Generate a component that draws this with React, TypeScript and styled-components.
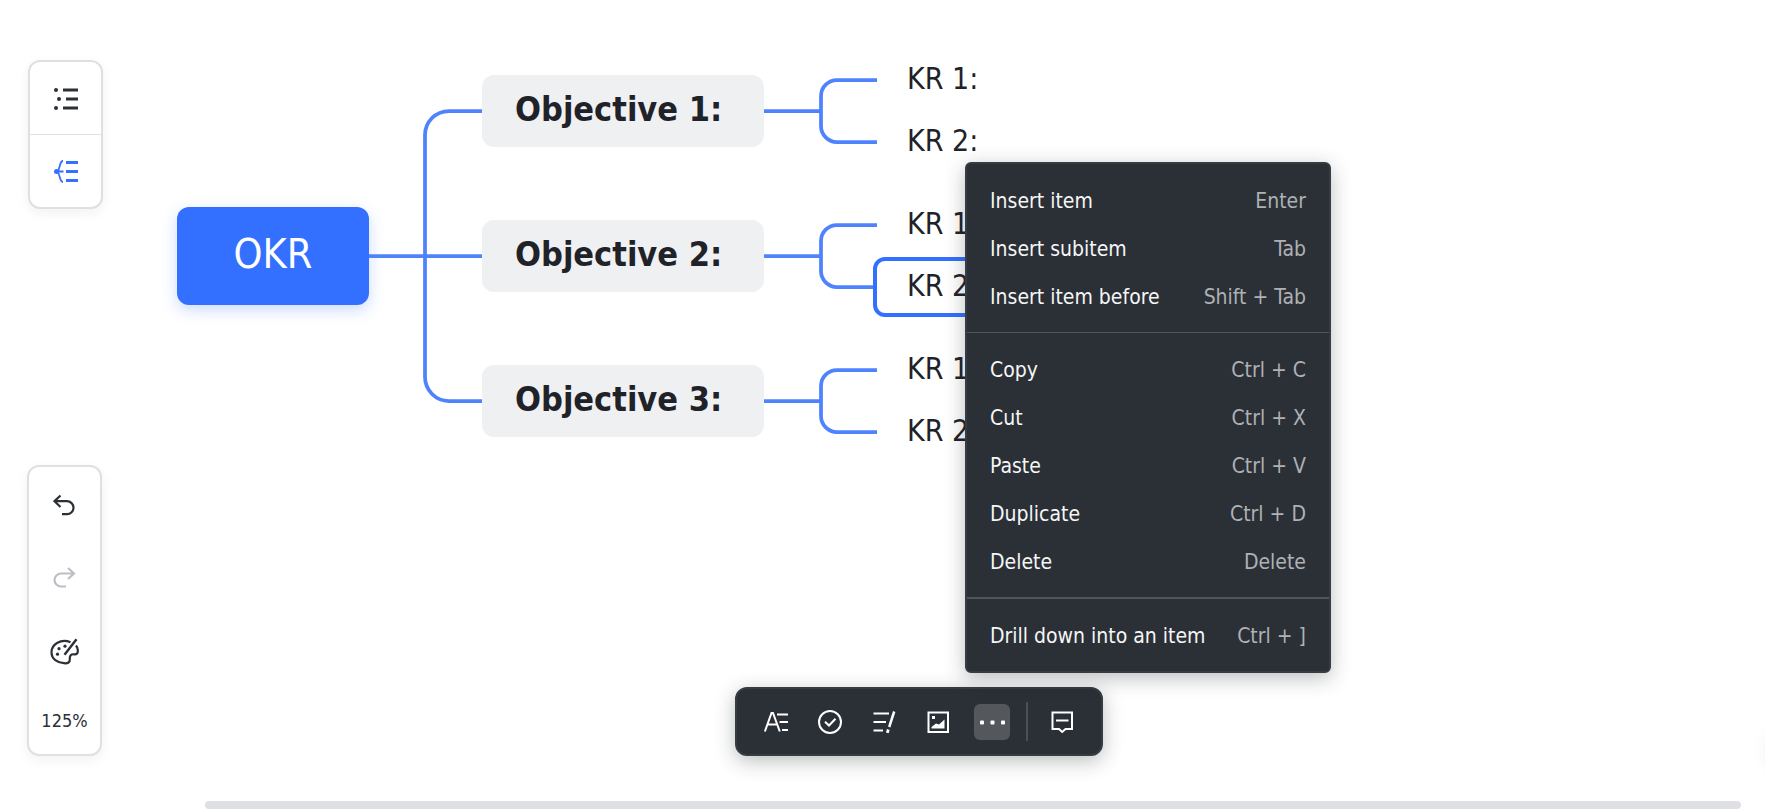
import React from "react";
import styled, { createGlobalStyle, css } from "styled-components";

const BLUE = "#3370ff";
const LINE = "#4e83fd";
const DARK = "#2b2f36";

const GlobalStyle = createGlobalStyle`
  * { box-sizing: border-box; }
  body {
    margin: 0;
    background: #fff;
    color: #1f2329;
    font-family: "DejaVu Sans Condensed", "DejaVu Sans", Tahoma, sans-serif;
  }
  button {
    font: inherit;
    color: inherit;
    border: 0;
    padding: 0;
    background: none;
    cursor: pointer;
  }
`;

const Page = styled.div`
  position: relative;
  display: flex;
  min-height: 100vh;
  overflow: hidden;
`;

const Rail = styled.aside`
  display: flex;
  flex: none;
  flex-direction: column;
  justify-content: space-between;
  padding: 60px 0 53px 27px;
`;

const Panel = styled.div`
  display: flex;
  flex-direction: column;
  width: 75px;
  background: #fff;
  border: 2px solid #dee0e3;
  border-radius: 12px;
  box-shadow: 0 4px 12px rgba(31, 35, 41, 0.06);
`;

const ViewPanel = styled(Panel)`
  margin-left: 1px;
`;

const RailButton = styled.button<{ $active?: boolean; $divided?: boolean; $size: number }>`
  display: flex;
  align-items: center;
  justify-content: center;
  height: ${(p) => p.$size}px;
  border-top: ${(p) => (p.$divided ? "1px solid #dee0e3" : "0")};
  color: ${(p) => (p.$active ? BLUE : DARK)};
  font-size: 18px;

  &:disabled {
    color: #bbbfc4;
  }
`;

const Main = styled.main`
  display: flex;
  flex: 1;
  flex-direction: column;
  justify-content: space-between;
  min-width: 0;
  padding: 49px 24px 0 0;
`;

const MindMap = styled.section`
  position: relative;
  display: flex;
  align-items: center;
  align-self: flex-start;
  margin-left: 74px;
`;

const RootNode = styled.div`
  display: flex;
  align-items: center;
  justify-content: center;
  width: 192px;
  height: 98px;
  padding-bottom: 4px;
  border-radius: 12px;
  background: ${BLUE};
  color: #fff;
  font-size: 41px;
  box-shadow: 0 5px 15px rgba(51, 112, 255, 0.25);
`;

const Connector = styled.svg`
  flex: none;
  display: block;
  fill: none;
  stroke: ${LINE};
  stroke-width: 3.75;
`;

const Branches = styled.div`
  display: flex;
  flex-direction: column;
  gap: 21px;
`;

const Branch = styled.div`
  display: flex;
  align-items: center;
`;

const Objective = styled.div`
  display: flex;
  align-items: center;
  width: 282px;
  height: 72px;
  padding: 0 33px 4px;
  border-radius: 12px;
  background: #eff0f1;
  font-size: 34px;
  font-weight: 700;
  white-space: nowrap;
`;

const KeyResults = styled.div`
  display: flex;
  flex-direction: column;
  gap: 10px;
  padding: 5px 0;
`;

const KeyResult = styled.div<{ $selected: boolean }>`
  display: flex;
  align-items: center;
  height: 52px;
  padding: 0 30px 4px;
  border-radius: 8px;
  font-size: 30px;
  white-space: nowrap;
  ${(p) =>
    p.$selected &&
    css`
      outline: 4px solid ${BLUE};
    `}
`;

const Menu = styled.div`
  position: absolute;
  z-index: 2;
  left: 788px;
  top: 113px;
  width: 366px;
  border: 2px solid #373c43;
  border-radius: 6px;
  background: ${DARK};
  box-shadow: 0 5px 20px rgba(31, 35, 41, 0.3);
`;

const MenuSection = styled.div<{ $rule: number }>`
  display: flex;
  flex-direction: column;
  padding: 12px 0;
  border-top: ${(p) => p.$rule}px solid #50555c;
`;

const MenuItem = styled.button`
  display: flex;
  align-items: center;
  justify-content: space-between;
  height: 48px;
  padding: 2px 23px 0;
  color: #f5f6f7;
  font-size: 21px;
  white-space: nowrap;
`;

const Shortcut = styled.span`
  color: #aeb1b5;
`;

const Footer = styled.footer`
  display: flex;
  flex-direction: column;
  gap: 45px;
`;

const Toolbar = styled.div`
  display: flex;
  align-items: center;
  align-self: center;
  gap: 16px;
  height: 69px;
  padding: 0 21px;
  margin-right: 7px;
  border: 2px solid #373c43;
  border-radius: 12px;
  background: ${DARK};
  color: #fff;
  box-shadow: 0 5px 20px rgba(31, 35, 41, 0.3);
`;

const ToolGroup = styled.div`
  display: flex;
  gap: 18px;
`;

const ToolButton = styled.button<{ $active?: boolean }>`
  display: flex;
  align-items: center;
  justify-content: center;
  width: 36px;
  height: 36px;
  border-radius: 6px;
  background: ${(p) => (p.$active ? "#54575c" : "transparent")};
`;

const ToolDivider = styled.span`
  width: 2px;
  height: 39px;
  background: #4b4f56;
`;

const ScrollTrack = styled.div`
  padding-left: 102px;
`;

const ScrollThumb = styled.div`
  height: 8px;
  border-radius: 4px;
  background: #dee0e3;
`;

const EdgeGlow = styled.div`
  position: absolute;
  right: -60px;
  bottom: 34px;
  width: 60px;
  height: 60px;
  border-radius: 50%;
  box-shadow: 0 4px 16px rgba(31, 35, 41, 0.06);
`;

const Icon = ({ size = 24, children }: { size?: number; children: React.ReactNode }) => (
  <svg
    width={size}
    height={size}
    viewBox={`0 0 ${size} ${size}`}
    fill="none"
    stroke="currentColor"
    strokeWidth={2}
    aria-hidden="true"
  >
    {children}
  </svg>
);

const OutlineIcon = () => (
  <Icon>
    <path d="M9 4h15M12 13h12M9 22h15" strokeWidth="3" />
    <g fill="currentColor" stroke="none">
      <circle cx="2" cy="4" r="2" />
      <circle cx="5" cy="13" r="2" />
      <circle cx="2" cy="22" r="2" />
    </g>
  </Icon>
);

const MapIcon = () => (
  <Icon>
    <path d="M12 3.500h12M12 12.500h12M12 21.500h12" strokeWidth="3" />
    <path
      d="M2 12.500h7.500M9 2C5.500 2 6.500 8.500 3.500 12.500C6.500 16.500 5.500 23 9 23"
      strokeWidth="1.800"
    />
    <circle cx="2.500" cy="12.500" r="2.500" fill="currentColor" stroke="none" />
  </Icon>
);

const UndoIcon = () => (
  <Icon>
    <path d="M7.500 3.500L1.500 9.200L7.500 15M1.500 9.200H14a6.500 6.500 0 0 1 0 13H9" strokeWidth="2.200" />
  </Icon>
);

const RedoIcon = () => (
  <Icon>
    <path d="M15 3L21 8.500L15 14M21 8.500H8a6.500 6.500 0 0 0 0 13H13" strokeWidth="2.200" />
  </Icon>
);

const PaletteIcon = () => (
  <Icon size={30}>
    <g transform="translate(-.500 .700)">
      <path
        d="M21 6.500C11.500 2.500 2 8.500 2 16.500C2 23.500 8 27 14.500 27.500C18.500 28 20.500 26.500 20.300 23.500C20 20 21.500 18.300 24.500 18.600C27.500 19 28.500 17.500 28.300 14.500C28.100 12.500 27.500 11 26.500 9.800"
        strokeWidth="2.200"
      />
      <path d="M27 3.500L15 19" strokeWidth="2.400" />
      <g fill="currentColor" stroke="none">
        <circle cx="8" cy="18.500" r="1.600" />
        <circle cx="9.500" cy="13" r="1.600" />
        <circle cx="15.500" cy="10.500" r="1.600" />
      </g>
    </g>
  </Icon>
);

const TextStyleIcon = () => (
  <Icon>
    <path d="M.900 21.500L7.500 3h1.500L15.800 21.500M3.500 14.500H13M13 4.500h11M15.500 12h8.500M18 20h6" />
  </Icon>
);

const TaskIcon = () => (
  <Icon>
    <circle cx="12" cy="12" r="11" />
    <path d="M7 11.800L11 15.500L17.500 8.800" />
  </Icon>
);

const NoteIcon = () => (
  <Icon>
    <path d="M1.500 3.500H17M1.500 12H14M1.500 20.500H11" />
    <path d="M22.200 1.500L17.200 17" strokeWidth="2.500" />
    <path d="M16.300 19.500L15.300 22.800" strokeWidth="2.800" />
  </Icon>
);

const ImageIcon = () => (
  <Icon>
    <rect x="2.500" y="2.500" width="19.500" height="19.500" />
    <rect x="6" y="6" width="3" height="3" fill="currentColor" stroke="none" />
    <path d="M5.500 18.500V17L10 13.500L13 14.500L18.500 9.500V18.500Z" fill="currentColor" stroke="none" />
  </Icon>
);

const MoreIcon = () => (
  <Icon size={28}>
    <g fill="currentColor" stroke="none">
      <rect x="2" y="12.500" width="4" height="4" rx="1" />
      <rect x="12.500" y="12.500" width="4" height="4" rx="1" />
      <rect x="23" y="12.500" width="4" height="4" rx="1" />
    </g>
  </Icon>
);

const CommentIcon = () => (
  <Icon>
    <path d="M2.500 2.500H22V19H15.500L12.200 22L9 19H2.500ZM6 10.500H18.500" />
  </Icon>
);

const objectives = ["Objective 1:", "Objective 2:", "Objective 3:"];
const keyResults = ["KR 1:", "KR 2:"];

const menu: [string, string][][] = [
  [
    ["Insert item", "Enter"],
    ["Insert subitem", "Tab"],
    ["Insert item before", "Shift + Tab"],
  ],
  [
    ["Copy", "Ctrl + C"],
    ["Cut", "Ctrl + X"],
    ["Paste", "Ctrl + V"],
    ["Duplicate", "Ctrl + D"],
    ["Delete", "Delete"],
  ],
  [["Drill down into an item", "Ctrl + ]"]],
];

const tools = [
  { label: "Text style", icon: <TextStyleIcon /> },
  { label: "Task", icon: <TaskIcon /> },
  { label: "Note", icon: <NoteIcon /> },
  { label: "Image", icon: <ImageIcon /> },
  { label: "More", icon: <MoreIcon />, active: true },
];

export default function App() {
  return (
    <Page>
      <GlobalStyle />
      <Rail>
        <ViewPanel>
          <RailButton $size={72} aria-label="Outline view">
            <OutlineIcon />
          </RailButton>
          <RailButton $size={73} $active $divided aria-label="Mind map view">
            <MapIcon />
          </RailButton>
        </ViewPanel>
        <Panel>
          <RailButton $size={73} aria-label="Undo">
            <UndoIcon />
          </RailButton>
          <RailButton $size={73} aria-label="Redo" disabled>
            <RedoIcon />
          </RailButton>
          <RailButton $size={73} aria-label="Theme">
            <PaletteIcon />
          </RailButton>
          <RailButton $size={68}>125%</RailButton>
        </Panel>
      </Rail>

      <Main>
        <MindMap>
          <RootNode>OKR</RootNode>
          <Connector width="113" height="414" aria-hidden="true">
            <path d="M0 207H113M113 62H80a24 24 0 0 0 -24 24V328a24 24 0 0 0 24 24H113" />
          </Connector>
          <Branches>
            {objectives.map((title, branch) => (
              <Branch key={title}>
                <Objective>{title}</Objective>
                <Connector width="113" height="124" aria-hidden="true">
                  <path d="M0 62H58M113 31H73a16 16 0 0 0 -16 16V77a16 16 0 0 0 16 16H113" />
                </Connector>
                <KeyResults>
                  {keyResults.map((name, i) => (
                    <KeyResult key={name} $selected={branch === 1 && i === 1}>
                      {name}
                    </KeyResult>
                  ))}
                </KeyResults>
              </Branch>
            ))}
          </Branches>

          <Menu role="menu">
            {menu.map((section, i) => (
              <MenuSection key={section[0][0]} $rule={i}>
                {section.map(([label, keys]) => (
                  <MenuItem key={label} role="menuitem">
                    <span>{label}</span>
                    <Shortcut>{keys}</Shortcut>
                  </MenuItem>
                ))}
              </MenuSection>
            ))}
          </Menu>
        </MindMap>

        <Footer>
          <Toolbar role="toolbar">
            <ToolGroup>
              {tools.map((tool) => (
                <ToolButton key={tool.label} $active={tool.active} aria-label={tool.label}>
                  {tool.icon}
                </ToolButton>
              ))}
            </ToolGroup>
            <ToolDivider />
            <ToolButton aria-label="Comment">
              <CommentIcon />
            </ToolButton>
          </Toolbar>
          <ScrollTrack>
            <ScrollThumb />
          </ScrollTrack>
        </Footer>
      </Main>
      <EdgeGlow />
    </Page>
  );
}
